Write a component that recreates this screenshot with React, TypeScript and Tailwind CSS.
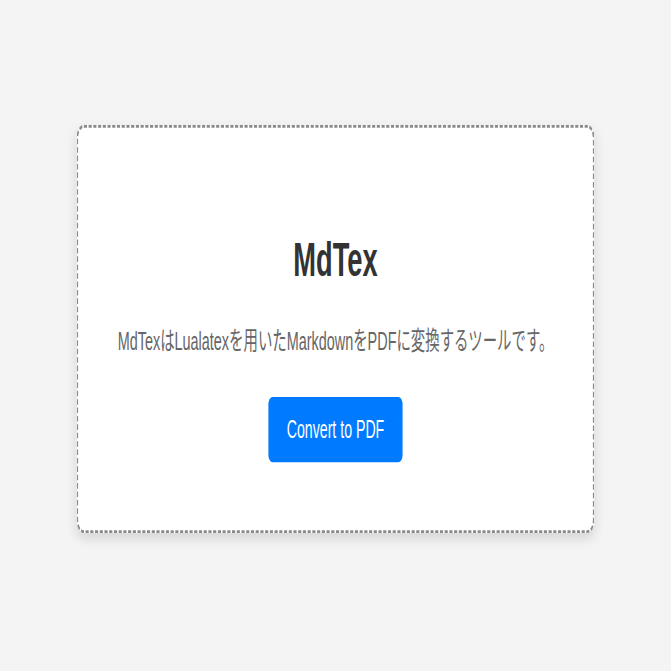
import React from "react";

export default function App() {
  return (
    <div className="w-[671px] h-[671px] overflow-hidden bg-[#f4f4f4]">
      <div className="w-[1280px] h-[720px] origin-top-left scale-x-[0.5242] scale-y-[0.9319] flex flex-col items-center pt-[134px]">
        <div className="w-[988px] bg-white rounded-[14px] border-[3px] border-dashed border-[#8a8a8a] shadow-[0_6px_16px_rgba(0,0,0,0.12)] flex flex-col items-center pt-[111px] pb-[73px]">
          <h1 className="text-[52px] leading-[60px] font-bold text-[#333333] font-['Liberation_Sans','Noto_Sans_CJK_JP',sans-serif]">
            MdTex
          </h1>
          <p className="mt-[44px] text-[27.5px] leading-[30px] text-[#666666] font-['Liberation_Sans','Noto_Sans_CJK_JP',sans-serif]">
            MdTexはLualatexを用いたMarkdownをPDFに変換するツールです。
          </p>
          <button className="mt-[44px] h-[70px] px-[35px] rounded-[8px] bg-[#007bff] text-white text-[27px] leading-[30px] font-['Liberation_Sans',sans-serif]">
            Convert to PDF
          </button>
        </div>
      </div>
    </div>
  );
}
